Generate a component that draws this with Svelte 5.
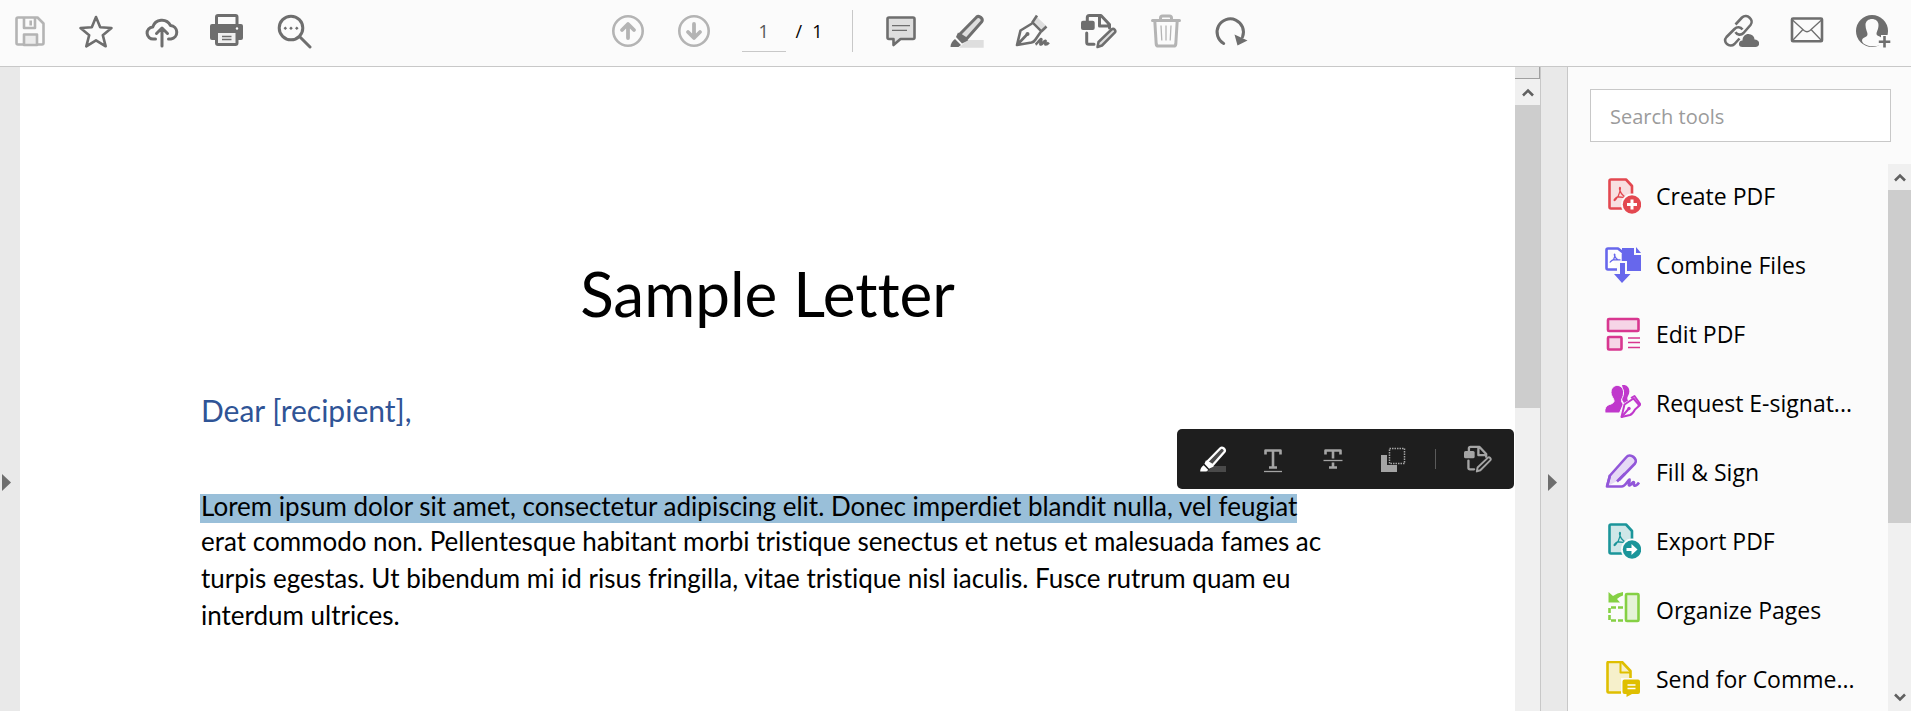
<script lang="ts">
	let page: string = "1";
	let search: string = "";

	let tools: { icon: string; label: string; color: string; tint: string }[] = [
		{ icon: "create", label: "Create PDF", color: "#e34850", tint: "#f8dfe0" },
		{ icon: "combine", label: "Combine Files", color: "#6767ec", tint: "#ffffff" },
		{ icon: "edit", label: "Edit PDF", color: "#d83790", tint: "#f6d5e7" },
		{ icon: "request", label: "Request E-signat...", color: "#c038cc", tint: "#f3daf5" },
		{ icon: "fill", label: "Fill & Sign", color: "#9256d9", tint: "#e6daf5" },
		{ icon: "export", label: "Export PDF", color: "#1b959a", tint: "#cfe7e8" },
		{ icon: "organize", label: "Organize Pages", color: "#85d044", tint: "#e5f3d8" },
		{ icon: "comments", label: "Send for Comme...", color: "#dfbf00", tint: "#f6f0cb" },
	];

	let lines: string[] = [
		"erat commodo non. Pellentesque habitant morbi tristique senectus et netus et malesuada fames ac",
		"turpis egestas. Ut bibendum mi id risus fringilla, vitae tristique nisl iaculis. Fusce rutrum quam eu",
		"interdum ultrices.",
	];
</script>

{#snippet acrobat()}
	<path d="M9.500 22.500c-1.300-.4 1-2.800 3.500-3.800 2.200-5.600 3-8.200 2.200-9.200-1.500-.8-.8 5.200 3.800 8.700 3 .2 3.200 1.800 1.300 1.600-2.300-.3-5-1.300-8-.6-1.200 2-2 3.400-2.800 3.300z" class="thin" />
{/snippet}

{#snippet highlighter()}
	<path class="tint" d="M10 34.700 16 29l3-2h15.700v7.700z" />
	<path class="line tint" d="m10.500 21.500 17-17.300c2.500-2.400 7.500 1.600 5 4.800L17.500 26z" />
	<path class="solid" d="m9 19.500 10 8-6 3-6-6.500zM6 26l6 6-2.500 2H1.500c0-3 1.500-6 4.500-8z" />
{/snippet}

{#snippet editDoc()}
	<path class="line" d="M6.300 8V4.500q0-2 2-2H20l8.500 9V15M18.500 3.500V13h9.500M5.700 20v9.300q0 2 2 2H13" />
	<rect class="solid" y="7.700" width="13.700" height="9.300" rx="2" />
	<path class="line tint pencil" d="m16.500 34 1-5L30.500 16.500c2.300-1.800 5 1.200 3.200 3.200L21 32.500z" />
{/snippet}

<div class="app">
	<header>
		<div class="group">
			<button class="off" aria-label="Save">
				<svg viewBox="0 0 36 36">
					<path class="mid" d="M6 4.500h19.500l6 6V30q0 1.500-1.500 1.500H6q-1.500 0-1.500-1.500V6q0-1.500 1.500-1.500z" />
					<path class="mid" d="M12 4v11h11V4M18.700 7.500v5" />
					<path class="mid tint" d="M12 32V21.500h13V32z" />
				</svg>
			</button>
			<button aria-label="Add to favourites">
				<svg viewBox="0 0 36 36">
					<path class="mid" d="m18 4 4.200 10.200 11.300.8-8.700 7.200 2.900 11.100L18 27.300l-9.700 6 2.900-11.100L2.500 15l11.300-.8z" />
				</svg>
			</button>
			<button aria-label="Upload to cloud">
				<svg viewBox="0 0 36 36">
					<path class="line" d="M11.500 26H9.500a6 6 0 0 1-.8-12A9.600 9.600 0 0 1 26.500 12.500 6.800 6.800 0 0 1 27 26h-2.500M18 33V17M12.500 20.500 18 15l5.500 5.500" />
				</svg>
			</button>
			<button aria-label="Print">
				<svg viewBox="0 0 36 36">
					<path class="line" d="M6.500 12V4q0-1.500 1.500-1.500h17.500q1.500 0 1.500 1.500v8" />
					<path class="solid" d="M2 11h29q2 0 2 2v12q0 2-2 2H2q-2 0-2-2V13q0-2 2-2z" />
					<path class="line paper" d="M6.500 18.500h20.500V30q0 1.500-1.500 1.500H8q-1.500 0-1.500-1.500z" />
					<path class="thin" d="M12 23.500h9.500M12 26.500h9.500" />
					<circle cx="27" cy="15.500" r="1.200" fill="#fff" />
				</svg>
			</button>
			<button aria-label="Find text">
				<svg viewBox="0 0 36 36">
					<circle class="line" cx="15" cy="15" r="11.800" />
					<path class="line" d="m24 24 10 10" />
					<path class="solid" d="m7.500 15.200 1.800-1.800 1.800 1.800-1.800 1.800zM13.200 15.200l1.800-1.800 1.800 1.800-1.800 1.800zM19 15.200l1.800-1.800 1.800 1.800-1.800 1.800z" />
				</svg>
			</button>
		</div>

		<div class="group middle">
			<button class="off" aria-label="Previous page">
				<svg viewBox="0 0 36 36">
					<circle class="mid" cx="18" cy="18" r="14.700" />
					<path class="bold" d="M18 25V11.500M12 17l6-6 6 6" />
				</svg>
			</button>
			<button class="off" aria-label="Next page">
				<svg viewBox="0 0 36 36">
					<circle class="mid" cx="18" cy="18" r="14.700" />
					<path class="bold" d="M18 11v13.500M12 19l6 6 6-6" />
				</svg>
			</button>
			<div class="pages">
				<input type="text" aria-label="Page number" bind:value={page} />
				<span>/</span>
				<span>1</span>
			</div>
			<span class="divider"></span>
			<button aria-label="Add comment">
				<svg viewBox="0 0 36 36">
					<path class="mid tint" d="M6 4.500h24q1.500 0 1.500 1.500v18.500q0 1.500-1.500 1.500H17.500l-7 6V26H6q-1.500 0-1.500-1.500V6q0-1.500 1.500-1.500z" />
					<path class="thin" d="M9 12.700h18M9 17.300h15" />
				</svg>
			</button>
			<button aria-label="Highlight text">
				<svg viewBox="0 0 36 36">{@render highlighter()}</svg>
			</button>
			<button aria-label="Sign document">
				<svg viewBox="0 0 36 36">
					<path class="tint" d="m21.500 3.500 10 9.500-4 4-8.500-8.500z" />
					<path class="mid" d="m22 2.500-4.500 6.800 9 9L31.500 13.500M17 10.500 5.500 17.500 2 32l14.500-2.500c2-.5 3-1.200 4-3l5.500-8M2.500 31.500l9.500-10" />
					<circle class="solid" cx="12.500" cy="21" r="2" />
					<path class="mid" d="M20.500 31.500c2-1 4-5 5.500-5.500 1.500 0-2 6 0 5.500s3-4 4.500-3.700c1 .3-1.200 3.700.3 3.700s2.200-1 3-2" />
				</svg>
			</button>
			<button aria-label="Edit document">
				<svg viewBox="0 0 36 36">{@render editDoc()}</svg>
			</button>
			<button class="off" aria-label="Delete">
				<svg viewBox="0 0 36 36">
					<path class="line" d="M5.500 7.500h27M13.500 7V5q0-2 2-2h7q2 0 2 2v2M7.800 8l1.400 23q.2 2 2 2h15.600q1.800 0 2-2L30.200 8" />
					<path class="thin" d="m14 12.500.8 15M19 12.500v15M24 12.500l-.8 15" />
				</svg>
			</button>
			<button aria-label="Rotate">
				<svg viewBox="0 0 36 36">
					<path class="line" d="M10.700 30.500A13.200 13.200 0 1 1 29.500 24" />
					<path class="solid" d="m21.500 21.500 13 6-10 5z" />
				</svg>
			</button>
		</div>

		<div class="group right">
			<button aria-label="Share link">
				<svg viewBox="0 0 36 36">
					<path class="mid" d="M12.500 11.500 19 4.500c5-4.500 12.500 2.500 8.500 7.500l-7 8c-2.500 2.500-6.500 2-8-.8" />
					<path class="mid" d="M19.500 16.500c-2-2.700-5.500-3-8-.5l-8 8C-1 29 6.500 35.500 11.500 31l5-5.500" />
					<path class="solid" d="M19.500 34c-5 0-4.500-6.500 0-6.500 0-4.500 3.500-7 7-6.300 3.500.5 5 3 5 5.300 6 0 6 7.500 1 7.500z" />
				</svg>
			</button>
			<button aria-label="Send by email">
				<svg viewBox="0 0 36 36">
					<rect class="mid" x="3" y="5.500" width="30" height="22.700" rx="1" />
					<path class="thin" d="m3.500 7 11.500 10.500q3 2.500 6 0L32.500 7M4 27l9.500-10M32 27l-9.500-10" />
				</svg>
			</button>
			<button aria-label="Invite people">
				<svg viewBox="0 0 36 36">
					<circle class="solid" cx="17" cy="18" r="16" />
					<path fill="#fbfbfb" d="M10.500 12c0-8 13-8 13 0 0 4.500-2 6.500-2 9 0 2.500 6 2 7 6.500l-3 4.500c-5 2-12 2-17-1.500-2-2-2-4.500 0-5.500 3-1.500 4-2 4-4s-2-4.500-2-9z" />
					<path d="M29.500 22v13M23 28.700h13" stroke="#fbfbfb" stroke-width="7" />
					<path class="mid" d="M29.500 23v11.500M23.800 28.700h11.500" />
				</svg>
			</button>
		</div>
	</header>

	<div class="body">
		<button class="rail" aria-label="Show navigation pane">
			<svg viewBox="0 0 10 18"><path d="M0 0v17l9-8.500z" /></svg>
		</button>

		<main>
			<h1>Sample Letter</h1>
			<h2>Dear [recipient],</h2>
			<p>
				<mark>Lorem ipsum dolor sit amet, consectetur adipiscing elit. Donec imperdiet blandit nulla, vel feugiat</mark>
				{#each lines as line}
					<span>{line}</span>
				{/each}
			</p>

			<div class="popup">
				<button class="active" aria-label="Highlight">
					<svg viewBox="0 0 36 36">{@render highlighter()}</svg>
				</button>
				<button aria-label="Underline">
					<svg viewBox="0 0 28 28">
						<path class="mid" d="M6.500 9.500V5.500h15v4M14 5.500v17M10 22.500h8" />
						<path class="thin" d="M5 26.500h18" />
					</svg>
				</button>
				<button aria-label="Strikethrough">
					<svg viewBox="0 0 28 28">
						<path class="mid" d="M6.500 9.500V5.500h15v4M14 5.500v17M10 22.500h8" />
						<path d="M4 15.500h20" stroke="#1e1e1e" stroke-width="4" />
						<path class="thin" d="M4.500 15.500h19" />
					</svg>
				</button>
				<button aria-label="Copy">
					<svg viewBox="0 0 28 28">
						<path class="solid" d="M2 10h6v10h10v7H2z" />
						<rect class="dotted" x="10.500" y="3.500" width="15" height="15" />
					</svg>
				</button>
				<span class="divider"></span>
				<button aria-label="Edit text">
					<svg viewBox="0 0 36 36">{@render editDoc()}</svg>
				</button>
			</div>
		</main>

		<div class="scrollbar doc">
			<span class="split"></span>
			<button aria-label="Scroll up"><svg viewBox="0 0 12 10"><path d="m1 8.500 5-5 5 5" /></svg></button>
			<span class="thumb"></span>
		</div>

		<button class="rail side" aria-label="Hide tools pane">
			<svg viewBox="0 0 10 18"><path d="M0 0v17l9-8.500z" /></svg>
		</button>

		<aside>
			<input type="search" placeholder="Search tools" aria-label="Search tools" bind:value={search} />
			<div class="scroller">
				<ul>
					{#each tools as tool}
						<li>
							<button style="--color: {tool.color}; --tint: {tool.tint}">
								<svg viewBox="0 0 36 36">
									{#if tool.icon === "create" || tool.icon === "export"}
										<path class="mid tint" d="M6 1.500h15L27 8v21q0 1.500-1.500 1.500H6q-1.500 0-1.500-1.500V3q0-1.500 1.500-1.500z" />
										{@render acrobat()}
										<circle cx="27" cy="26.500" r="11" fill="#fbfbfb" />
										<circle class="solid" cx="27" cy="26.500" r="9.200" />
										{#if tool.icon === "create"}
											<path d="M27 21.500v10M22 26.500h10" stroke="#fff" stroke-width="3" />
										{:else}
											<path fill="#fff" d="M21.500 25h5v-4l6 5.500-6 5.500v-4h-5z" />
										{/if}
									{:else if tool.icon === "combine"}
										<path class="solid" d="M17 1h12v7h7v16H22V14h-5z" />
										<path class="solid" d="M31 0v6h5z" />
										<path class="mid tint" d="M3 1.500h10l5 4V14M12 22.500H3q-1.500 0-1.500-1.500V3q0-1.500 1.500-1.500" />
										<path class="thin" d="M5.500 15.500c-.8-.6 1-2 3-2.800 1.500-3.600 2-5 1.200-5.500-1-.4.2 4 3.300 5.600h2.500M8.500 12.700l4.500.1" />
										<path d="M17.500 14v14" stroke="#fbfbfb" stroke-width="9" />
										<path class="solid" d="M15 16h5v11h5.500l-8.500 9-8-9h6z" />
									{:else if tool.icon === "edit"}
										<rect class="mid tint" x="3" y="3" width="30.500" height="12" rx="1" />
										<rect class="mid tint" x="3" y="21" width="13.500" height="12.500" rx="1" />
										<path class="thin" d="M23 22h12M23 26.500h12M23 31.500h12" />
									{:else if tool.icon === "request"}
										<path class="solid" d="M17 0c7-1 9 6 6 11q-1.500 2.500 0 4.500L19 18l-3-5 3-4z" />
										<path class="solid halo" d="M6 7.500C6-2 19-2 18.500 8c0 4-2 5-2 7.500s2 2.500 1.500 4.500l-3.500 8H0c-1-6 2.500-8 6-9 3.500-1.500 3.500-3 2.500-5S6 10 6 7.500z" />
										<path class="thinmid halo2" d="m16.500 32 3-12.500 9-6 6 7-4.500 4c-1.500 3-2.500 4.500-5 5.500z" />
										<path class="thinmid" d="m16.500 32 7-8M26 13l3.500-2 6 8.500-2.500 1.500" />
										<circle class="solid" cx="24" cy="23.500" r="1.700" />
									{:else if tool.icon === "fill"}
										<path class="mid tint" d="M2 32.500 5 21.500 21.500 3c3.500-4.500 12 2 8.500 6.500L14 26" />
										<path class="mid" d="M5 21 2 32.500h14.500c4 0 7-7.500 8-7s-2 6.500 0 6 2.500-3.500 4-3.500-1 3.500 1 3.700c2 .3 3-1 4.500-3.200M12 27.500l8-8" />
									{:else if tool.icon === "organize"}
										<rect class="mid tint" x="21" y="2" width="12.500" height="27" rx="1" />
										<path class="solid" d="M3.500 0v10.500H15l-3-3.500q3-3 6-3.500V0q-6 1-10 4z" />
										<path class="dash" d="M18 15.500H4.500v13H18" />
									{:else}
										<path class="mid tint" d="M3.500 1H17l8.500 9v21.500H3.500q-1 0-1-1V2q0-1 1-1z" />
										<path class="thinmid" d="M15.500 2v9.500H25" />
										<path d="M16 17h20v18H16z" fill="#fbfbfb" />
										<path class="solid" d="M19.500 18.500h13.500q2 0 2 2V31q0 2-2 2h-6L21.500 36v-3h-2q-2 0-2-2V20.500q0-2 2-2z" />
										<path d="M22.500 24h8M22.500 27.500h8" stroke="#fff" stroke-width="1.500" />
									{/if}
								</svg>
								{tool.label}
							</button>
						</li>
					{/each}
				</ul>
				<div class="scrollbar">
					<button aria-label="Scroll tools up"><svg viewBox="0 0 12 10"><path d="m1 8.500 5-5 5 5" /></svg></button>
					<span class="thumb"></span>
					<button class="down" aria-label="Scroll tools down"><svg viewBox="0 0 12 10"><path d="m1 1.500 5 5 5-5" /></svg></button>
				</div>
			</div>
		</aside>
	</div>
</div>

<style>
	:global(body) {
		margin: 0;
	}

	.app {
		--color: #6e6e6e;
		--tint: #dedede;
		display: flex;
		flex-direction: column;
		height: 100vh;
		overflow: hidden;
		background: #fbfbfb;
		font-family: "Open Sans", "Noto Sans", sans-serif;
		color: #000;
	}

	button {
		display: flex;
		align-items: center;
		padding: 0;
		border: 0;
		background: none;
		font: inherit;
		color: inherit;
	}

	/* icon parts */
	svg {
		display: block;
		flex: none;
		width: 36px;
		height: 36px;
		fill: none;
		stroke-linejoin: round;
	}
	.line {
		stroke: var(--color);
		stroke-width: 3;
		stroke-linecap: round;
	}
	.mid {
		stroke: var(--color);
		stroke-width: 2.6;
	}
	.bold {
		stroke: var(--color);
		stroke-width: 3.8;
		stroke-linecap: round;
	}
	.thin {
		stroke: var(--color);
		stroke-width: 1.3;
	}
	.thinmid {
		stroke: var(--color);
		stroke-width: 2;
	}
	.pencil {
		stroke-width: 2.5;
	}
	.solid {
		fill: var(--color);
	}
	.tint {
		fill: var(--tint);
	}
	.paper {
		fill: #f0f0f0;
	}
	.halo {
		stroke: #fbfbfb;
		stroke-width: 1;
	}
	.halo2 {
		fill: #fbfbfb;
	}
	.dotted {
		stroke: var(--color);
		stroke-width: 1.5;
		stroke-dasharray: 1.5 1;
	}
	.dash {
		stroke: var(--color);
		stroke-width: 2.6;
		stroke-dasharray: 5 2;
	}

	header {
		display: grid;
		grid-template-columns: 1fr auto 1fr;
		height: 66px;
		flex: none;
		border-bottom: 1px solid #c8c8c8;
	}
	.group {
		display: flex;
		align-items: center;
		gap: 30px;
		height: 62px;
		padding-left: 12px;
	}
	.middle {
		padding: 0 52px 0 0;
	}
	.right {
		justify-content: flex-end;
		padding: 0 20px 0 0;
	}
	.off {
		--color: #b4b4b4;
		--tint: #ececec;
	}
	.pages {
		display: flex;
		align-items: center;
		gap: 10px;
		font-size: 18px;
	}
	.pages input {
		box-sizing: border-box;
		width: 44px;
		height: 41px;
		padding: 0;
		border: 0;
		border-bottom: 1px solid #c8c8c8;
		background: none;
		font: inherit;
		text-align: center;
		color: #555;
	}
	header .divider {
		width: 1px;
		height: 42px;
		background: #c8c8c8;
	}

	.body {
		display: flex;
		flex: 1;
		min-height: 0;
	}
	.rail {
		align-items: flex-start;
		box-sizing: border-box;
		flex: none;
		width: 20px;
		padding: 407px 0 0 2px;
		background: #e9e9e9;
	}
	.rail svg {
		width: 10px;
		height: 18px;
		fill: #6e6e6e;
	}
	.side {
		width: 28px;
		padding-left: 7px;
		border: solid #c8c8c8;
		border-width: 0 1px;
	}

	main {
		position: relative;
		flex: 1;
		min-width: 0;
		background: #fff;
		font-family: Lato, "Open Sans", sans-serif;
		font-variant-ligatures: none;
	}
	h1 {
		margin: 181px 0 0;
		font-size: 62px;
		font-weight: 400;
		line-height: 90px;
		text-align: center;
	}
	h2 {
		margin: 50px 0 0 181px;
		font-size: 30px;
		font-weight: 400;
		line-height: 44px;
		color: #2f5496;
	}
	p {
		display: flex;
		flex-direction: column;
		align-items: flex-start;
		margin: 62px 0 0 180px;
		font-size: 26px;
		line-height: 37px;
		white-space: nowrap;
	}
	p span {
		padding-left: 1px;
	}
	mark {
		padding: 0 0 5px 1px;
		line-height: 24px;
		background: #99bfd9;
		color: inherit;
	}

	.popup {
		--color: #a4a4a4;
		--tint: #1e1e1e;
		position: absolute;
		top: 362px;
		right: 1px;
		display: flex;
		align-items: center;
		gap: 32px;
		height: 60px;
		padding: 0 22px;
		box-sizing: border-box;
		border-radius: 5px;
		background: #1e1e1e;
	}
	.popup svg {
		width: 28px;
		height: 28px;
	}
	.popup .divider {
		width: 1px;
		height: 20px;
		margin: 0 -4px;
		background: #5a5a5a;
	}
	.popup .active {
		--color: #fff;
		--tint: #4a4a4a;
	}

	.scrollbar {
		display: flex;
		flex-direction: column;
		flex: none;
		width: 23px;
		margin-top: 3px;
		background: #f0f0f0;
	}
	.scrollbar button {
		justify-content: center;
		height: 26px;
	}
	.scrollbar svg {
		width: 12px;
		height: 10px;
		stroke: #606060;
		stroke-width: 2.6;
		stroke-linejoin: miter;
	}
	.thumb {
		height: 333px;
		background: #cdcdcd;
	}
	.down {
		margin-top: auto;
	}
	.doc {
		width: 25px;
		margin-top: 0;
	}
	.doc .thumb {
		height: 303px;
	}
	.split {
		height: 11px;
		border: solid #a0a0a0;
		border-width: 0 1px 1px 0;
		background: #e6e6e6;
	}

	aside {
		display: flex;
		flex-direction: column;
		flex: none;
		width: 343px;
	}
	aside input {
		box-sizing: border-box;
		height: 53px;
		margin: 22px 20px 19px 22px;
		padding: 2px 19px 0;
		border: 1px solid #c8c8c8;
		background: #fff;
		font: inherit;
		font-size: 20px;
	}
	aside input::placeholder {
		color: #9b9b9b;
	}
	.scroller {
		display: flex;
		flex: 1;
		min-height: 0;
	}
	ul {
		flex: 1;
		margin: 0;
		padding: 0 0 0 37px;
		overflow: hidden;
		list-style: none;
	}
	li button {
		gap: 15px;
		width: 100%;
		height: 69px;
		font-size: 23px;
		white-space: nowrap;
	}
</style>
